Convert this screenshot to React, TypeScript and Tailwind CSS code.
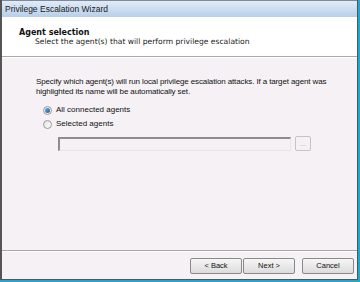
import React, { useState } from 'react';

const font = { fontFamily: '"Liberation Sans", Arial, sans-serif' };

const Radio: React.FC<{ checked: boolean; label: string; onClick: () => void }> = ({ checked, label, onClick }) => (
  <div className="flex items-center h-[14px] cursor-default" onClick={onClick}>
    <span className="w-[9px] h-[9px] rounded-full border border-[#9a9a9a] bg-gradient-to-br from-[#e4e4e4] to-[#fdfdfd] flex items-center justify-center">
      {checked && <span className="w-[5px] h-[5px] rounded-full bg-gradient-to-br from-[#5ab0e8] to-[#1b5e9a]" />}
    </span>
    <span className="ml-[4px] text-[8px] text-[#111]">{label}</span>
  </div>
);

const WizButton: React.FC<{ children: React.ReactNode; className?: string }> = ({ children, className }) => (
  <button className={`h-[16px] w-[52px] border border-[#8a8a8a] rounded-[2px] bg-gradient-to-b from-[#f6f6f6] to-[#dcdcdc] text-[7.5px] text-[#111] leading-none ${className ?? ''}`}>
    {children}
  </button>
);

export default function App() {
  const [mode, setMode] = useState<'all' | 'selected'>('all');

  return (
    <div className="w-[360px] h-[282px] bg-[#2ba3c6] overflow-hidden" style={font}>
      <div className="w-[358px] h-[280px] flex flex-col border-l-2 border-r border-b border-[#555] bg-[#f5f1f5]">
        {/* title bar */}
        <div className="h-[17px] shrink-0 flex items-center pl-[3px] bg-gradient-to-b from-[#e2ebf6] to-[#b7cfe9] border-t border-[#7d8a99]">
          <span className="text-[8.5px] text-[#1a1a1a]">Privilege Escalation Wizard</span>
        </div>

        {/* header */}
        <div className="h-[40px] shrink-0 bg-white border-b border-[#a9a9a9] pl-[17px] pt-[11px]" style={{ fontFamily: '"DejaVu Sans", Verdana, sans-serif' }}>
          <div className="text-[8px] font-bold leading-[9px] text-[#111]">Agent selection</div>
          <div className="text-[7.6px] leading-[10px] pl-[16px] text-[#222] whitespace-nowrap">Select the agent(s) that will perform privilege escalation</div>
        </div>
        <div className="h-px bg-white shrink-0" />

        {/* body */}
        <div className="flex-1 pl-[34px] pt-[19px]">
          <p className="text-[8px] leading-[10px] text-[#111] whitespace-nowrap tracking-[-0.12px]">
            Specify which agent(s) will run local privilege escalation attacks. If a target agent was
            <br />
            highlighted its name will be automatically set.
          </p>
          <div className="mt-[6px] pl-[7px] flex flex-col">
            <Radio checked={mode === 'all'} label="All connected agents" onClick={() => setMode('all')} />
            <Radio checked={mode === 'selected'} label="Selected agents" onClick={() => setMode('selected')} />
          </div>
          <div className="mt-[5px] ml-[22px] flex items-center gap-[4px]">
            <div className="w-[233px] h-[14px] border-t-2 border-l-2 border-[#8d8d8d] border-r border-b border-r-[#e6e6e6] border-b-[#e6e6e6] bg-[#f5f1f5]" />
            <button className="w-[16px] h-[15px] border border-[#c4c4c4] rounded-[2px] bg-[#f3f1f3] text-[7px] text-[#aaa] leading-none">...</button>
          </div>
        </div>

        {/* footer */}
        <div className="h-[2px] shrink-0 border-t border-[#a8a8a8] border-b border-b-white" />
        <div className="h-[27px] shrink-0 flex items-center justify-end pr-[3px]">
          <WizButton>&lt; Back</WizButton>
          <WizButton className="ml-[1px]">Next &gt;</WizButton>
          <WizButton className="ml-[7px]">Cancel</WizButton>
        </div>
      </div>
    </div>
  );
}
